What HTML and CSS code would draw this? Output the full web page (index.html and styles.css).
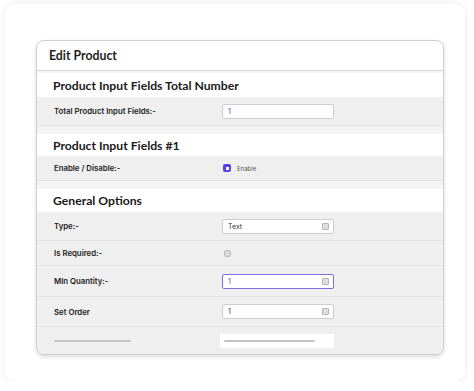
FILE: index.html
```html
<!DOCTYPE HTML>
<html>
	<head>
		<title>Edit Product</title>
		<meta charset="utf-8" />
		<link rel="stylesheet" href="styles.css">
	</head>
	<body>
		<div class="frame">
			<div class="panel">
				<div class="panel-title">Edit Product</div>

				<div class="section first">
					<div class="section-title">Product Input Fields Total Number</div>
					<div class="row h29">
						<div class="label">Total Product Input Fields:-</div>
						<div class="field"><div class="input value">1</div></div>
					</div>
				</div>

				<div class="section">
					<div class="section-title t22">Product Input Fields #1</div>
					<div class="row h25">
						<div class="label">Enable / Disable:-</div>
						<div class="field check-wrap"><span class="check on"></span><span class="check-text">Enable</span></div>
					</div>
				</div>

				<div class="section">
					<div class="section-title t23">General Options</div>
					<div class="row h29">
						<div class="label">Type:-</div>
						<div class="field"><div class="input">Text<span class="spin"></span></div></div>
					</div>
					<div class="row h25">
						<div class="label">Is Required:-</div>
						<div class="field"><span class="check off"></span></div>
					</div>
					<div class="row h31">
						<div class="label">Mln Quantity:-</div>
						<div class="field"><div class="input value focus">1<span class="spin"></span></div></div>
					</div>
					<div class="row h30">
						<div class="label">Set Order</div>
						<div class="field"><div class="input">1<span class="spin"></span></div></div>
					</div>
					<div class="row h27 last">
						<div class="label"><span class="ghost-line"></span></div>
						<div class="field"><div class="ghost-box"><span class="ghost-line long"></span></div></div>
					</div>
				</div>
			</div>
		</div>
	</body>
</html>
```

FILE: styles.css
```css
body {
	margin: 0;
	padding: 0;
	background: #fff;
	font-family: Inter, "Noto Sans", sans-serif;
	color: #1f1f1f;
}

.frame {
	margin: 4px 9px 0 5px;
	height: 377px;
	box-sizing: border-box;
	padding: 36px 21px 0 31px;
	border-radius: 10px;
	background: #fff;
	box-shadow: 0 0 8px rgba(0, 0, 0, 0.09);
}

.panel {
	height: 315px;
	box-sizing: border-box;
	border: 1px solid #cfcfcf;
	border-radius: 8px;
	background: #f4f4f4;
	overflow: hidden;
	box-shadow: 0 2px 4px rgba(0, 0, 0, 0.14);
}

.panel-title {
	height: 29px;
	display: flex;
	align-items: center;
	padding-left: 12px;
	background: #fff;
	border-bottom: 1px solid #dcdcdc;
	font-family: Lato, sans-serif;
	font-size: 12.3px;
	font-weight: 700;
}

.section {
	margin-top: 9px;
}

.section.first {
	margin-top: 2px;
}

.section-title {
	height: 24px;
	display: flex;
	align-items: center;
	padding-left: 16px;
	background: #fff;
	font-family: Lato, sans-serif;
	font-size: 12.2px;
	font-weight: 700;
	color: #1a1a1a;
}

.section-title.t22 { height: 22px; }
.section-title.t23 { height: 23px; }

.section + .section {
	margin-top: 8px;
}

.row {
	display: grid;
	grid-template-columns: 168px 1fr;
	align-items: center;
	padding-left: 17px;
	background: #efefef;
	border-bottom: 1px solid #e2e2e2;
	box-sizing: border-box;
}

.row.h25 { height: 25px; }
.row.h27 { height: 27px; }
.row.h29 { height: 29px; }
.row.h30 { height: 30px; }
.row.h31 { height: 31px; }
.row.last { border-bottom: none; }

.label {
	font-size: 7.8px;
	font-weight: 600;
	color: #222;
	display: flex;
	align-items: center;
}

.field {
	display: flex;
	align-items: center;
}

.input {
	position: relative;
	width: 112px;
	height: 15px;
	box-sizing: border-box;
	border: 1px solid #cdcdcd;
	border-radius: 2px;
	background: #fff;
	padding-left: 5px;
	font-size: 7px;
	line-height: 13px;
	color: #333;
}

.input.value {
	color: #4a3fb0;
}

.input.focus {
	border-color: #7d6fe0;
}

.spin {
	position: absolute;
	right: 4px;
	top: 3px;
	width: 5px;
	height: 5px;
	border: 1px solid #b5b5b5;
	background: #dedede;
	border-radius: 1px;
}

.check {
	display: inline-block;
	box-sizing: border-box;
	width: 8px;
	height: 8px;
	border-radius: 2px;
	position: relative;
	margin-left: 1px;
}

.check.on {
	background: #5a3fe6;
}

.check.on::after {
	content: '';
	position: absolute;
	left: 2.5px;
	top: 2.5px;
	width: 3px;
	height: 3px;
	background: #fff;
}

.check.off {
	width: 7px;
	height: 7px;
	margin-left: 2px;
	border: 1px solid #bdbdbd;
	background: #d9d9d9;
}

.check-text {
	margin-left: 6px;
	font-size: 6px;
	color: #555;
}

.ghost-line {
	display: block;
	width: 77px;
	height: 2px;
	background: #c4c4c4;
	border-radius: 1px;
}

.ghost-box {
	width: 114px;
	height: 14px;
	margin-left: -2px;
	background: #fff;
	display: flex;
	align-items: center;
	padding-left: 4px;
	box-sizing: border-box;
}

.ghost-line.long {
	width: 91px;
}
```
